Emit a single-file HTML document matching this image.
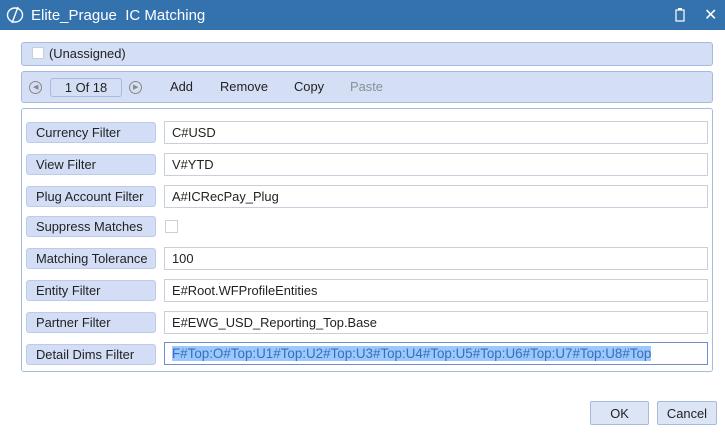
<!DOCTYPE html>
<html><head><style>
*{box-sizing:border-box;margin:0;padding:0}
body{width:725px;height:433px;background:#fff;font-family:"Liberation Sans",sans-serif;font-size:12.9px;color:#222;position:relative;overflow:hidden}
.abs{position:absolute}
.title{left:0;top:0;width:725px;height:30px;background:#3472ae;color:#fff;font-size:15px}
.bar{background:#d4dff5;border:1px solid #a9badf;border-radius:3px}
.lbl{position:absolute;left:26px;width:130px;height:21px;background:#d3def6;border:1px solid #bccbe8;border-radius:3px;padding:2px 0 0 9px;white-space:nowrap;overflow:hidden}
.inp{position:absolute;left:164px;width:544px;height:23px;border:1px solid #c8d0dc;padding:3px 0 0 7px;background:#fff}
.btn{background:#dce5f6;border:1px solid #a9badf;border-radius:2px;text-align:center;padding-top:4px}
.circ{width:13px;height:13px;border:1px solid #888;border-radius:50%;top:81px}
</style></head><body>
<div class="abs title">
 <svg class="abs" style="left:6px;top:6px" width="18" height="18" viewBox="0 0 18 18"><ellipse cx="9" cy="9" rx="7.5" ry="7" fill="none" stroke="#fff" stroke-width="1.4"/><path d="M12 1 L6 17" stroke="#fff" stroke-width="1.4"/></svg>
 <span class="abs" style="left:31px;top:7px">Elite_Prague&nbsp; IC Matching</span>
 <svg class="abs" style="left:675px;top:7px" width="10" height="15" viewBox="0 0 10 15"><rect x="1" y="3" width="8" height="11" fill="none" stroke="#fff" stroke-width="1.2"/><rect x="3" y="1" width="4" height="2.5" fill="#fff"/></svg>
 <span class="abs" style="left:704px;top:5px;font-size:16px">✕</span>
</div>
<div class="abs bar" style="left:21px;top:42px;width:692px;height:24px"></div>
<div class="abs" style="left:32px;top:47px;width:12px;height:12px;background:#fff;border:1px solid #c8cfdc"></div>
<span class="abs" style="left:49px;top:46px">(Unassigned)</span>
<div class="abs bar" style="left:21px;top:71px;width:692px;height:32px"></div>
<div class="abs circ" style="left:29px"></div><span class="abs" style="left:33px;top:83px;font-size:7px;color:#888">◀</span>
<div class="abs" style="left:50px;top:78px;width:72px;height:19px;border:1px solid #a9badf;border-radius:3px;text-align:center;padding-top:1px">1 Of 18</div>
<div class="abs circ" style="left:129px"></div><span class="abs" style="left:133px;top:83px;font-size:7px;color:#888">▶</span>
<span class="abs" style="left:170px;top:79px">Add</span>
<span class="abs" style="left:220px;top:79px">Remove</span>
<span class="abs" style="left:294px;top:79px">Copy</span>
<span class="abs" style="left:350px;top:79px;color:#8a8f99">Paste</span>
<div class="abs" style="left:21px;top:108px;width:692px;height:264px;border:1px solid #a9badf;border-radius:3px"></div>
<div class="lbl" style="top:122px">Currency Filter</div><div class="inp" style="top:121px">C#USD</div>
<div class="lbl" style="top:154px">View Filter</div><div class="inp" style="top:153px">V#YTD</div>
<div class="lbl" style="top:186px">Plug Account Filter</div><div class="inp" style="top:185px">A#ICRecPay_Plug</div>
<div class="lbl" style="top:216px">Suppress Matches</div><div class="abs" style="left:165px;top:220px;width:13px;height:13px;border:1px solid #c8d0dc"></div>
<div class="lbl" style="top:248px">Matching Tolerance</div><div class="inp" style="top:247px">100</div>
<div class="lbl" style="top:280px">Entity Filter</div><div class="inp" style="top:279px">E#Root.WFProfileEntities</div>
<div class="lbl" style="top:312px">Partner Filter</div><div class="inp" style="top:311px">E#EWG_USD_Reporting_Top.Base</div>
<div class="lbl" style="top:344px">Detail Dims Filter</div><div class="inp" style="top:342px;border-color:#6d8fc8"><span style="background:#99c9ff;color:#3d6cb8;font-size:13.4px">F#Top:O#Top:U1#Top:U2#Top:U3#Top:U4#Top:U5#Top:U6#Top:U7#Top:U8#Top</span></div>
<div class="abs btn" style="left:590px;top:401px;width:59px;height:24px">OK</div>
<div class="abs btn" style="left:657px;top:401px;width:60px;height:24px">Cancel</div>
</body></html>
